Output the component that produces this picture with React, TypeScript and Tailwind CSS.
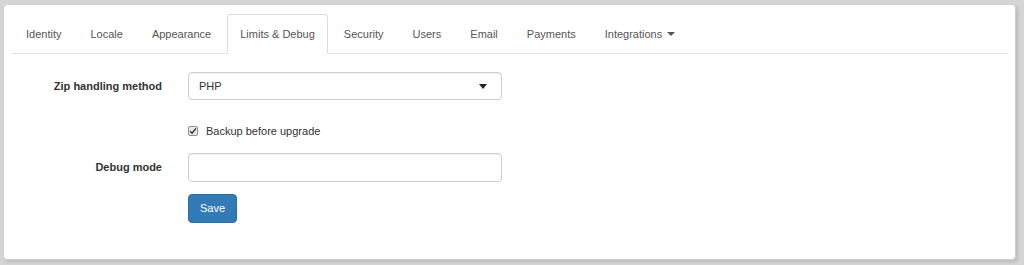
import React from "react";

const tabs = [
  "Identity",
  "Locale",
  "Appearance",
  "Limits & Debug",
  "Security",
  "Users",
  "Email",
  "Payments",
];

export default function App() {
  return (
    <div
      className="w-[1024px] h-[265px] bg-[#d5d5d5] pt-[4px] pl-[3px] pr-[8px] pb-[5px]"
      style={{ fontFamily: '"Liberation Sans", Arial, sans-serif' }}
    >
      <div className="h-full bg-white rounded-[4px] border border-[#cfcfcf] shadow-[2px_2px_3px_rgba(0,0,0,0.12)] pt-[9px]">
        {/* Tabs */}
        <div className="ml-[8px] mr-[7px] flex border-b border-[#e3e3e3] h-[40px] pl-[1px]">
          {tabs.map((t) => {
            const active = t === "Limits & Debug";
            return (
              <div
                key={t}
                className={
                  active
                    ? "h-[40px] mb-[-1px] mr-[3px] px-[12px] flex items-center rounded-t-[4px] border border-[#dddddd] border-b-white bg-white text-[11px] text-[#555555]"
                    : "h-[40px] mb-[-1px] mr-[3px] px-[12px] flex items-center rounded-t-[4px] border border-transparent text-[11px] text-[#555555]"
                }
              >
                {t}
              </div>
            );
          })}
          <div className="h-[40px] mb-[-1px] px-[12px] flex items-center border border-transparent text-[11px] text-[#555555]">
            Integrations
            <span className="ml-[5px] inline-block w-0 h-0 border-l-[4px] border-r-[4px] border-t-[4px] border-l-transparent border-r-transparent border-t-[#555555]" />
          </div>
        </div>

        {/* Form */}
        <div className="text-[11px] text-[#333333]">
          <div className="flex items-center mt-[18px]">
            <div className="w-[158px] text-right font-bold">Zip handling method</div>
            <div className="ml-[26px] w-[314px] h-[28px] border border-[#cccccc] rounded-[4px] flex items-center justify-between pl-[10px] pr-[14px] shadow-[inset_0_1px_1px_rgba(0,0,0,0.06)]">
              <span>PHP</span>
              <span className="inline-block w-0 h-0 border-l-[4px] border-r-[4px] border-t-[5px] border-l-transparent border-r-transparent border-t-[#222222]" />
            </div>
          </div>

          <div className="flex items-center mt-[21px] h-[20px]">
            <div className="w-[158px]" />
            <div className="ml-[26px] flex items-center">
              <span className="w-[10px] h-[10px] rounded-[2px] border border-[#8f8f8f] bg-[#e9e9e9] flex items-center justify-center">
                <svg width="8" height="8" viewBox="0 0 8 8">
                  <path d="M1.2 4.2 L3.1 6.2 L6.9 1.4" fill="none" stroke="#333333" strokeWidth="1.5" />
                </svg>
              </span>
              <span className="ml-[8px]">Backup before upgrade</span>
            </div>
          </div>

          <div className="flex items-center mt-[12px]">
            <div className="w-[158px] text-right font-bold">Debug mode</div>
            <div className="ml-[26px] w-[314px] h-[29px] border border-[#cccccc] rounded-[4px] shadow-[inset_0_1px_1px_rgba(0,0,0,0.06)]" />
          </div>

          <div className="flex items-center mt-[12px]">
            <div className="w-[158px]" />
            <div className="ml-[26px] w-[49px] h-[29px] rounded-[4px] bg-[#337ab7] border border-[#2e6da4] text-white flex items-center justify-center text-[11px]">
              Save
            </div>
          </div>
        </div>
      </div>
    </div>
  );
}
